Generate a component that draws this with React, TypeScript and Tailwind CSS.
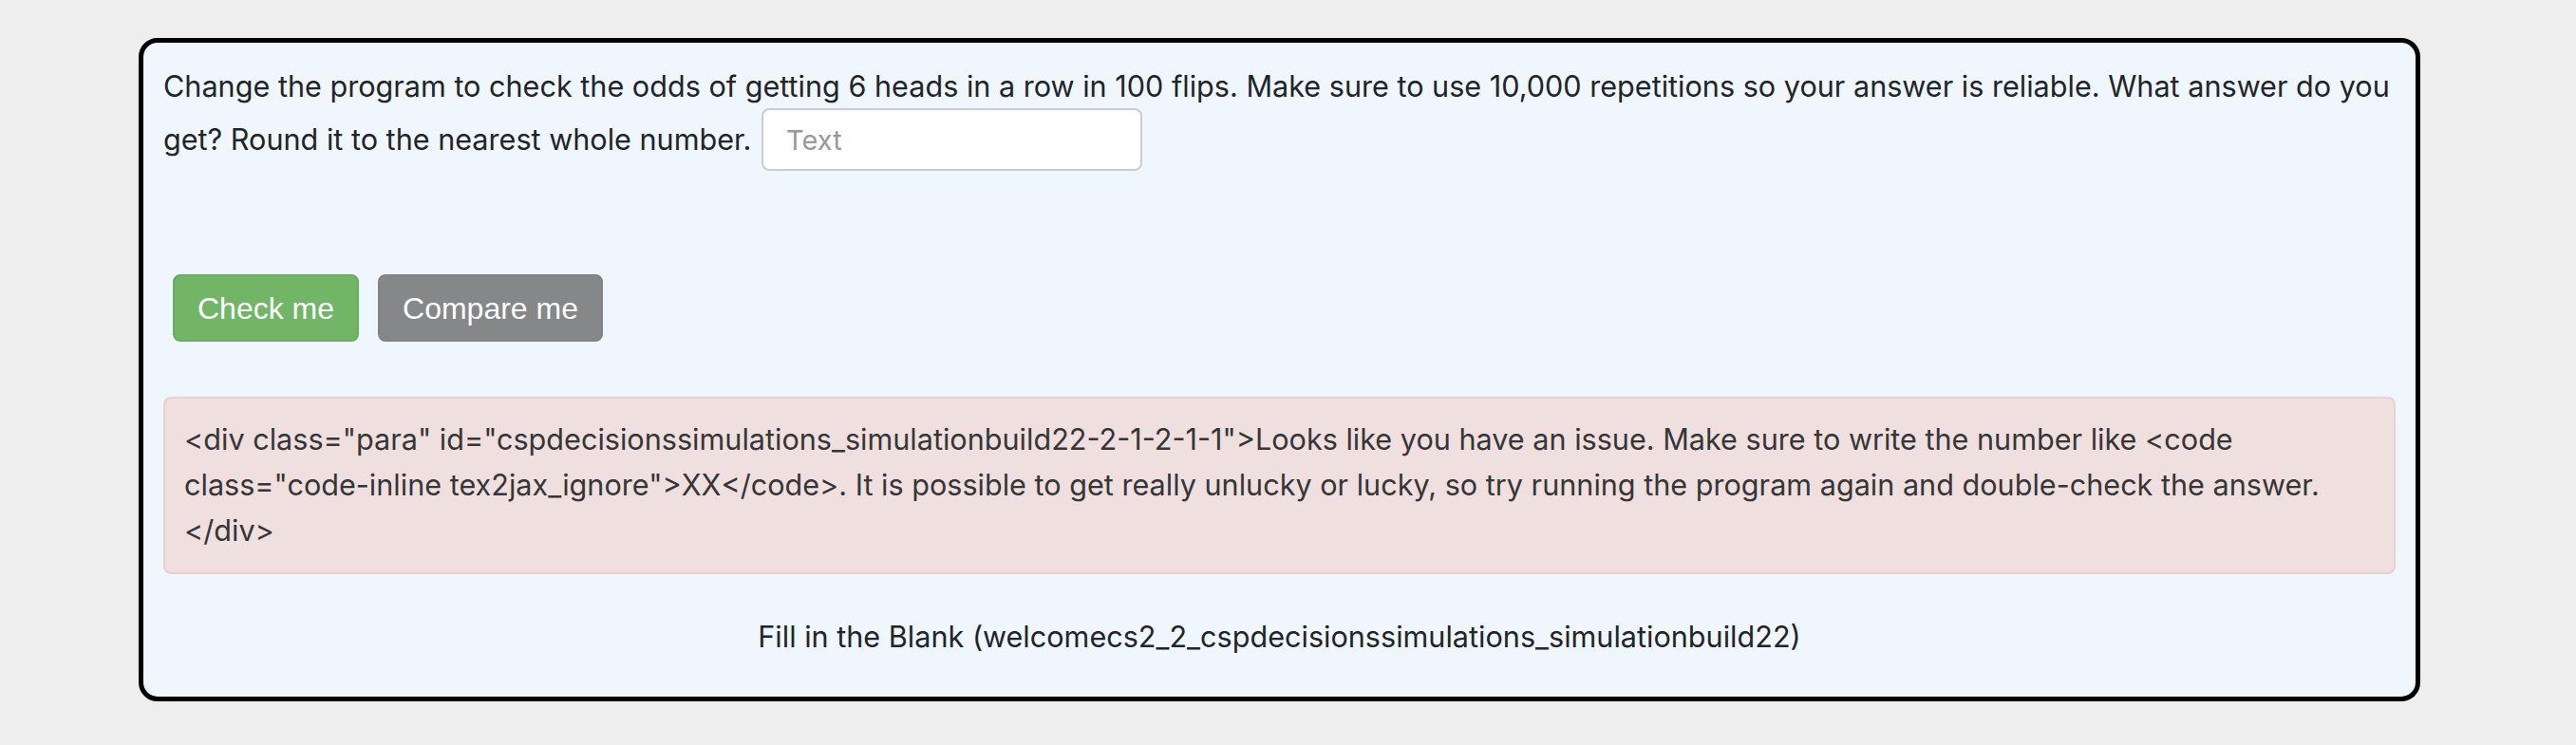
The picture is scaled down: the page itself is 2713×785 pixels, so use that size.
import React from "react";

export default function App() {
  return (
    <div className="min-h-[785px] w-[2713px] bg-[#eeeeee] pt-[40px] font-['Inter',sans-serif]">
      {/* Fill in the blank card */}
      <div className="ml-[146px] w-[2403px] rounded-[20px] border-[5px] border-black bg-[#eff6fd] px-[21px] pb-[43px]">
        <p className="pt-[26px] text-[30.6px] leading-[40px] text-[#212529]">
          Change the program to check the odds of getting 6 heads in a row in 100 flips. Make sure to use 10,000 repetitions so your answer is reliable. What answer do you get? Round it to the nearest whole number.{" "}
          <input
            type="text"
            placeholder="Text"
            className="my-[3px] ml-[2px] box-border h-[66px] w-[401px] rounded-[8px] border-2 border-[#cccccc] bg-white px-[24px] align-baseline text-[29px] text-[#333] placeholder:text-[#999999]"
          />
        </p>

        <div className="ml-[10px] mt-[106px] flex gap-[20px] font-['Liberation_Sans',sans-serif]">
          <button className="h-[71px] rounded-[8px] border-2 border-[#69ad5e] bg-[#72b567] px-[24px] text-[32px] text-white">
            Check me
          </button>
          <button className="h-[71px] rounded-[8px] border-2 border-[#808285] bg-[#858789] px-[24px] text-[32px] text-white">
            Compare me
          </button>
        </div>

        <div className="mt-[58px] rounded-[8px] border-2 border-[#e8d0d5] bg-[#efdfdf] px-[20px] pb-[20px] pt-[19px] text-[30.6px] leading-[48px] text-[#363636]">
          &lt;div class="para" id="cspdecisionssimulations_simulationbuild22-2-1-2-1-1"&gt;Looks like you have an issue. Make sure to write the number like &lt;code class="code-inline tex2jax_ignore"&gt;XX&lt;/code&gt;. It is possible to get really unlucky or lucky, so try running the program again and double-check the answer. &lt;/div&gt;
        </div>

        <div className="mt-[46px] text-center text-[30.6px] leading-[40px] text-[#212529]">
          Fill in the Blank (welcomecs2_2_cspdecisionssimulations_simulationbuild22)
        </div>
      </div>
    </div>
  );
}
